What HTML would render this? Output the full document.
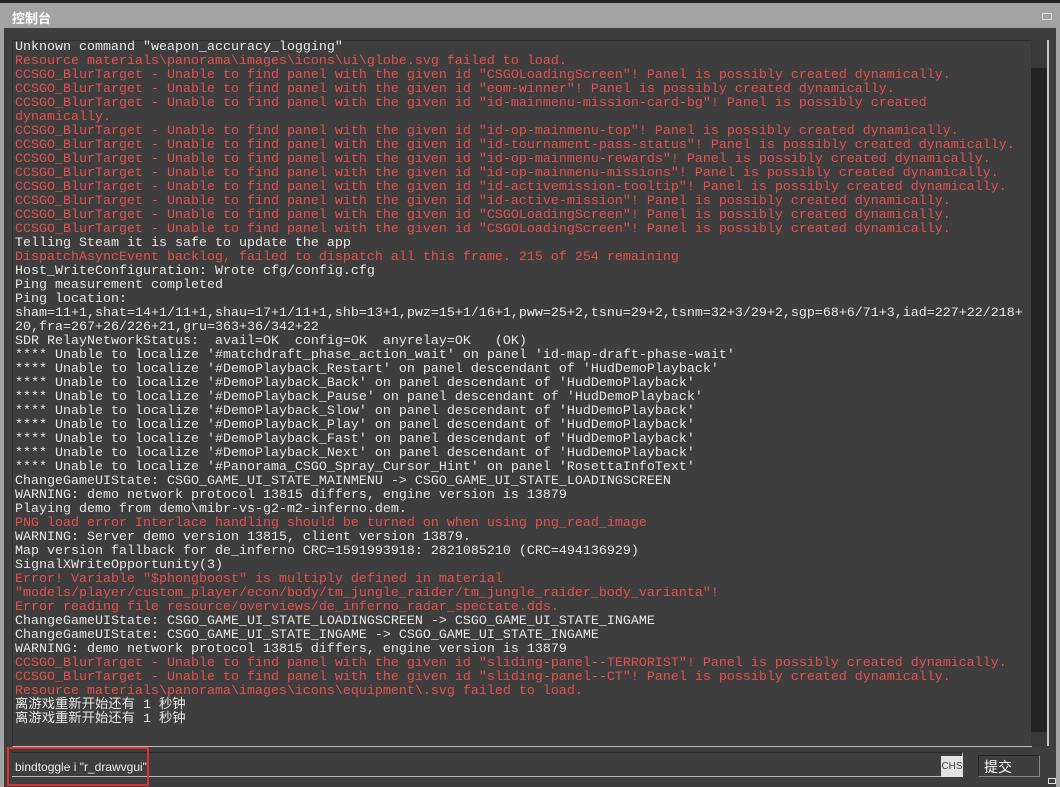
<!DOCTYPE html><html><head><meta charset="utf-8"><style>
body{margin:0;width:1060px;height:787px;background:#a3a3a3;overflow:hidden;position:relative;font-family:"Liberation Sans","Noto Sans CJK SC",sans-serif}
.top{position:absolute;left:0;top:0;width:1060px;height:3px;background:#222}
.title{position:absolute;left:12px;top:8px;color:#fff;font-size:13px;font-weight:bold}
.max{position:absolute;left:1042px;top:13px;width:8px;height:5px;border:1px solid #ddd}
.body{position:absolute;left:4px;top:28px;width:1052px;height:759px;background:#3e3e3e}
.box{position:absolute;left:12px;top:40px;width:1019px;height:705px;border-top:1px solid #2e2e2e;border-left:1px solid #2e2e2e;border-bottom:1px solid #bdbdbd}
.sb{position:absolute;left:1031px;top:40px;width:16px;height:706px;background:#232323;border-right:2px solid #c8c8c8}
.sb .up{height:28px;background:#383838}
.sb .dn{position:absolute;bottom:0;left:0;width:16px;height:14px;background:#383838}
pre{position:absolute;left:15px;top:41px;margin:0;font-family:"Liberation Mono","Noto Sans CJK SC",monospace;font-size:13.33px;line-height:14px;color:#e8e8e8;white-space:pre}
.r{color:#e35050}
.inp{position:absolute;left:12px;top:752px;width:951px;height:25px;border-top:1px solid #2a2a2a;border-bottom:1px solid #bbb;border-right:1px solid #bbb;font-size:12px;color:#eee;line-height:28px;padding-left:3px;box-sizing:border-box}
.chs{position:absolute;left:941px;top:756px;width:22px;height:21px;background:#e3e3e3;color:#444;font-size:10px;line-height:22px;text-align:center;overflow:hidden}
.btn{position:absolute;left:978px;top:755px;width:62px;height:22px;border:1px solid #222;border-right-color:#888;border-bottom-color:#888;color:#fff;font-size:14px;line-height:22px;padding-left:5px;box-sizing:border-box}
.red{position:absolute;left:7px;top:747px;width:138px;height:35px;border:2px solid #e03030}
.rs{position:absolute;left:1048px;top:778px;width:6px;height:4px;border:1px solid #ddd}
</style></head><body>
<div class="top"></div>
<div class="title">控制台</div>
<div class="max"></div>
<div class="body"></div>
<div class="box"></div>
<div class="sb"><div class="up"></div><div class="dn"></div></div>
<pre>Unknown command "weapon_accuracy_logging"
<span class="r">Resource materials\panorama\images\icons\ui\globe.svg failed to load.
CCSGO_BlurTarget - Unable to find panel with the given id "CSGOLoadingScreen"! Panel is possibly created dynamically.
CCSGO_BlurTarget - Unable to find panel with the given id "eom-winner"! Panel is possibly created dynamically.
CCSGO_BlurTarget - Unable to find panel with the given id "id-mainmenu-mission-card-bg"! Panel is possibly created
dynamically.
CCSGO_BlurTarget - Unable to find panel with the given id "id-op-mainmenu-top"! Panel is possibly created dynamically.
CCSGO_BlurTarget - Unable to find panel with the given id "id-tournament-pass-status"! Panel is possibly created dynamically.
CCSGO_BlurTarget - Unable to find panel with the given id "id-op-mainmenu-rewards"! Panel is possibly created dynamically.
CCSGO_BlurTarget - Unable to find panel with the given id "id-op-mainmenu-missions"! Panel is possibly created dynamically.
CCSGO_BlurTarget - Unable to find panel with the given id "id-activemission-tooltip"! Panel is possibly created dynamically.
CCSGO_BlurTarget - Unable to find panel with the given id "id-active-mission"! Panel is possibly created dynamically.
CCSGO_BlurTarget - Unable to find panel with the given id "CSGOLoadingScreen"! Panel is possibly created dynamically.
CCSGO_BlurTarget - Unable to find panel with the given id "CSGOLoadingScreen"! Panel is possibly created dynamically.</span>
Telling Steam it is safe to update the app
<span class="r">DispatchAsyncEvent backlog, failed to dispatch all this frame. 215 of 254 remaining</span>
Host_WriteConfiguration: Wrote cfg/config.cfg
Ping measurement completed
Ping location:
sham=11+1,shat=14+1/11+1,shau=17+1/11+1,shb=13+1,pwz=15+1/16+1,pww=25+2,tsnu=29+2,tsnm=32+3/29+2,sgp=68+6/71+3,iad=227+22/218+
20,fra=267+26/226+21,gru=363+36/342+22
SDR RelayNetworkStatus:  avail=OK  config=OK  anyrelay=OK   (OK)
**** Unable to localize '#matchdraft_phase_action_wait' on panel 'id-map-draft-phase-wait'
**** Unable to localize '#DemoPlayback_Restart' on panel descendant of 'HudDemoPlayback'
**** Unable to localize '#DemoPlayback_Back' on panel descendant of 'HudDemoPlayback'
**** Unable to localize '#DemoPlayback_Pause' on panel descendant of 'HudDemoPlayback'
**** Unable to localize '#DemoPlayback_Slow' on panel descendant of 'HudDemoPlayback'
**** Unable to localize '#DemoPlayback_Play' on panel descendant of 'HudDemoPlayback'
**** Unable to localize '#DemoPlayback_Fast' on panel descendant of 'HudDemoPlayback'
**** Unable to localize '#DemoPlayback_Next' on panel descendant of 'HudDemoPlayback'
**** Unable to localize '#Panorama_CSGO_Spray_Cursor_Hint' on panel 'RosettaInfoText'
ChangeGameUIState: CSGO_GAME_UI_STATE_MAINMENU -> CSGO_GAME_UI_STATE_LOADINGSCREEN
WARNING: demo network protocol 13815 differs, engine version is 13879
Playing demo from demo\mibr-vs-g2-m2-inferno.dem.
<span class="r">PNG load error Interlace handling should be turned on when using png_read_image</span>
WARNING: Server demo version 13815, client version 13879.
Map version fallback for de_inferno CRC=1591993918: 2821085210 (CRC=494136929)
SignalXWriteOpportunity(3)
<span class="r">Error! Variable "$phongboost" is multiply defined in material
"models/player/custom_player/econ/body/tm_jungle_raider/tm_jungle_raider_body_varianta"!
Error reading file resource/overviews/de_inferno_radar_spectate.dds.</span>
ChangeGameUIState: CSGO_GAME_UI_STATE_LOADINGSCREEN -> CSGO_GAME_UI_STATE_INGAME
ChangeGameUIState: CSGO_GAME_UI_STATE_INGAME -> CSGO_GAME_UI_STATE_INGAME
WARNING: demo network protocol 13815 differs, engine version is 13879
<span class="r">CCSGO_BlurTarget - Unable to find panel with the given id "sliding-panel--TERRORIST"! Panel is possibly created dynamically.
CCSGO_BlurTarget - Unable to find panel with the given id "sliding-panel--CT"! Panel is possibly created dynamically.
Resource materials\panorama\images\icons\equipment\.svg failed to load.</span>
离游戏重新开始还有 1 秒钟
离游戏重新开始还有 1 秒钟</pre>
<div class="inp">bindtoggle i "r_drawvgui"</div>
<div class="chs">CHS</div>
<div class="btn">提交</div>
<div class="red"></div>
<div class="rs"></div>
</body></html>
